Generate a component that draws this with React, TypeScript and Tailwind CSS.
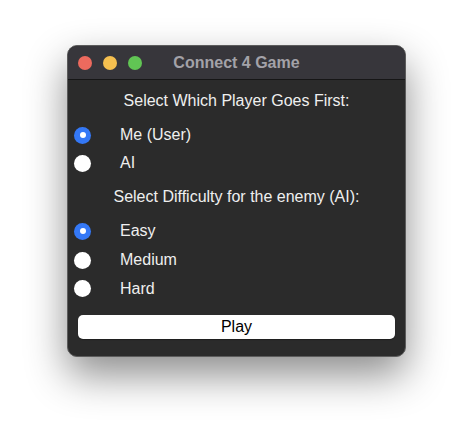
import { useState } from "react";

function Radio({ checked }: { checked: boolean }) {
  return checked ? (
    <span className="flex h-[17px] w-[17px] items-center justify-center rounded-full bg-[#3478f6]">
      <span className="h-[6px] w-[6px] rounded-full bg-white" />
    </span>
  ) : (
    <span className="h-[17px] w-[17px] rounded-full bg-white" />
  );
}

function Option({
  label,
  checked,
  onSelect,
  className,
}: {
  label: string;
  checked: boolean;
  onSelect: () => void;
  className: string;
}) {
  return (
    <button
      type="button"
      onClick={onSelect}
      className={`flex items-center pl-[6px] text-left ${className}`}
    >
      <Radio checked={checked} />
      <span className="ml-[29px] text-[16px] text-[#efefef]">{label}</span>
    </button>
  );
}

export default function App() {
  const [first, setFirst] = useState("user");
  const [level, setLevel] = useState("easy");

  return (
    <div
      className="h-[447px] w-[474px] bg-white pl-[67px] pt-[45px]"
      style={{ fontFamily: '"Liberation Sans", Arial, sans-serif' }}
    >
      <div className="flex h-[312px] w-[339px] flex-col overflow-hidden rounded-[10px] border border-[#5c5c5c] bg-[#2b2b2b] shadow-[0_18px_40px_rgba(0,0,0,0.45)]">
        <div className="relative flex h-[34px] items-center border-b border-[#161616] bg-[#37363b]">
          <div className="flex gap-[11px] pl-[10px]">
            <span className="h-[14px] w-[14px] rounded-full bg-[#ed6a5e]" />
            <span className="h-[14px] w-[14px] rounded-full bg-[#f5bf4f]" />
            <span className="h-[14px] w-[14px] rounded-full bg-[#61c554]" />
          </div>
          <div className="absolute inset-0 flex items-center justify-center text-[16px] font-bold text-[#a3a2a8]">
            Connect 4 Game
          </div>
        </div>

        <div className="mt-[7px] flex h-[28px] items-center justify-center text-[16px] text-[#efefef]">
          Select Which Player Goes First:
        </div>
        <Option
          label="Me (User)"
          checked={first === "user"}
          onSelect={() => setFirst("user")}
          className="mt-[6px] h-[28px]"
        />
        <Option
          label="AI"
          checked={first === "ai"}
          onSelect={() => setFirst("ai")}
          className="h-[28px]"
        />

        <div className="mt-[6px] flex h-[28px] items-center justify-center text-[16px] text-[#efefef]">
          Select Difficulty for the enemy (AI):
        </div>
        <Option
          label="Easy"
          checked={level === "easy"}
          onSelect={() => setLevel("easy")}
          className="mt-[6px] h-[28px]"
        />
        <Option
          label="Medium"
          checked={level === "medium"}
          onSelect={() => setLevel("medium")}
          className="mt-[1px] h-[28px]"
        />
        <Option
          label="Hard"
          checked={level === "hard"}
          onSelect={() => setLevel("hard")}
          className="h-[29px]"
        />

        <button
          type="button"
          className="mx-[10px] mt-[12px] h-[24px] rounded-[5px] bg-white text-[16px] text-black shadow-[0_1px_1px_rgba(0,0,0,0.3)]"
        >
          Play
        </button>
      </div>
    </div>
  );
}
